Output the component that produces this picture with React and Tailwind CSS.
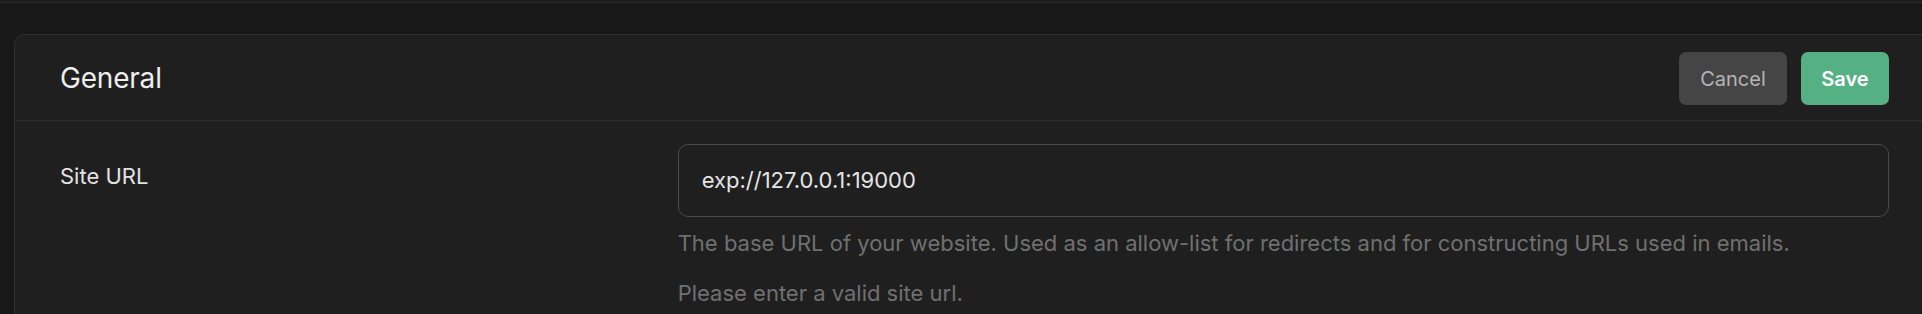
// Settings card: "General" header with Cancel / Save and a Site URL field

export default function App() {
  return (
    <div
      className="h-[314px] w-[1922px] overflow-hidden bg-[#181818]"
      style={{ fontFamily: 'Inter, "Noto Sans", sans-serif' }}
    >
      {/* strip of the page bar above */}
      <div className="h-[3px] border-b border-[#2b2b2b] bg-[#1c1c1c]" />

      <div className="pl-[14px] pt-[31px]">
        <div className="w-[1922px] rounded-[10px] border border-[#2e2e2e] bg-[#1f1f1f] pb-[60px]">
          {/* header */}
          <div className="flex h-[86px] items-center justify-between border-b border-[#2e2e2e] pl-[45px] pr-[46px]">
            <h2 className="text-[28px] font-normal tracking-[-0.2px] text-[#ededed]">General</h2>
            <div className="flex items-center gap-[14px] pt-[2px]">
              <button className="h-[53px] w-[108px] rounded-[7px] bg-[#454545] text-[20px] text-[#b4b4b4]">
                Cancel
              </button>
              <button className="h-[53px] w-[88px] rounded-[7px] bg-[#55b083] text-[20px] font-semibold text-white">
                Save
              </button>
            </div>
          </div>

          {/* Site URL row */}
          <div className="grid grid-cols-3 gap-6 pl-[45px] pr-[46px] pt-[23px]">
            <label className="pt-[17px] text-[22px] leading-[30px] text-[#e2e2e2]">Site URL</label>
            <div className="col-span-2">
              <div className="flex h-[73px] items-center rounded-[10px] border border-[#4a4a4a] bg-[#1f1f1f] px-[23px]">
                <span className="text-[22px] text-[#e4e4e4]">exp://127.0.0.1:19000</span>
              </div>
              <p className="mt-[11px] text-[22px] leading-[30px] text-[#707070]">
                The base URL of your website. Used as an allow-list for redirects and for constructing URLs used in emails.
              </p>
              <p className="mt-[20px] text-[22px] leading-[30px] text-[#707070]">Please enter a valid site url.</p>
            </div>
          </div>
        </div>
      </div>
    </div>
  )
}
